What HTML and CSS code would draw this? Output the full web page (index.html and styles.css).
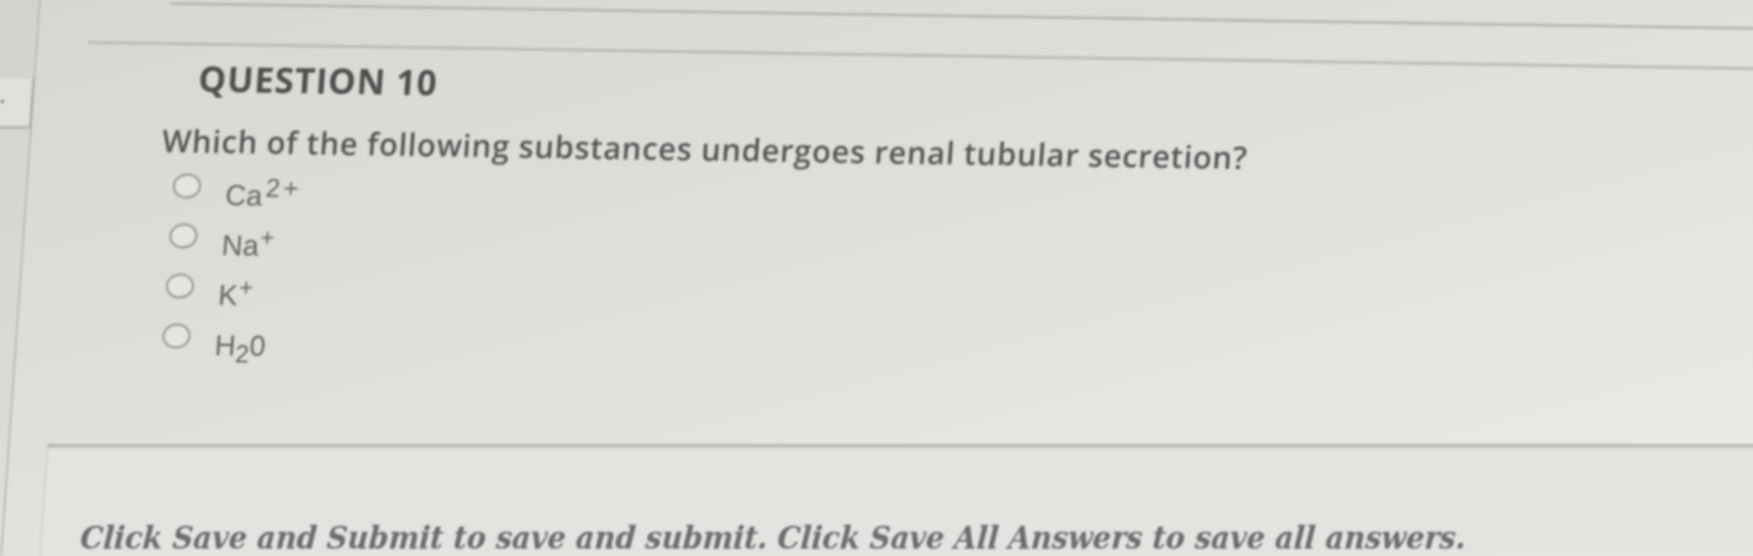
FILE: index.html
```html
<!DOCTYPE html>
<html lang="en">
<head>
<meta charset="utf-8">
<title>Question 10</title>
<link rel="stylesheet" href="styles.css">
</head>
<body>
<div class="screen">
  <aside class="sidebar">
    <div class="sidebar-tab"><span class="tab-dot"></span></div>
  </aside>
  <main class="content">
    <section class="question-area">
      <div class="prev-question-edge"></div>
      <div class="question">
        <h2 class="question-title">QUESTION 10</h2>
        <p class="question-text">Which of the following substances undergoes renal tubular secretion?</p>
        <ul class="options">
          <li class="option"><span class="radio"></span><span class="label">Ca<sup class="charge-lg">2+</sup></span></li>
          <li class="option"><span class="radio"></span><span class="label">Na<sup>+</sup></span></li>
          <li class="option"><span class="radio"></span><span class="label">K<sup>+</sup></span></li>
          <li class="option"><span class="radio"></span><span class="label">H<sub>2</sub>0</span></li>
        </ul>
      </div>
    </section>
    <footer class="submit-bar">
      <p class="submit-note">Click Save and Submit to save and submit. Click Save All Answers to save all answers.</p>
    </footer>
  </main>
</div>
</body>
</html>
```

FILE: styles.css
```css
html, body {
  margin: 0;
  padding: 0;
}

body {
  width: 1753px;
  height: 556px;
  overflow: hidden;
  background: linear-gradient(165deg, #d7d6d1 0%, #dfdfda 40%, #e6e6e2 75%, #ebebe8 100%);
}

.screen {
  display: grid;
  grid-template-columns: 50px 1fr;
  width: 1830px;
  height: 556px;
  margin-left: -30px;
  transform-origin: 0 300px;
  transform: skewX(-4deg);
  filter: blur(0.8px);
}

.sidebar {
  background: linear-gradient(180deg, #d3d2cd 0%, #dad9d4 60%, #e0e0dc 100%);
  border-right: 2px solid #bebdb8;
  padding-top: 77px;
}

.sidebar-tab {
  height: 48px;
  margin-right: -1px;
  background: #e1e0db;
  border-top: 1px solid #c9c8c3;
  border-bottom: 3px solid #b6b5b0;
  border-right: 2px solid #a9a8a3;
  position: relative;
}

.tab-dot {
  position: absolute;
  left: 17px;
  top: 22px;
  width: 3px;
  height: 3px;
  background: #7a7b78;
  border-radius: 1px;
}

.content {
  display: grid;
  grid-template-rows: 444px 1fr;
  min-width: 0;
}

.question-area {
  transform-origin: 0 0;
  transform: skewY(0.9deg);
}

.prev-question-edge {
  height: 3px;
  margin-left: 130px;
  background: #bab9b4;
}

.question {
  margin: 37px 0 0 50px;
  border-top: 3px solid #bdbcb6;
  padding-top: 12px;
}

.question-title {
  margin: 0;
  padding-left: 113px;
  font-family: "Open Sans", "Liberation Sans", sans-serif;
  font-weight: 700;
  font-size: 35px;
  line-height: 42px;
  color: #4d524e;
  letter-spacing: 0.8px;
}

.question-text {
  margin: 22px 0 0 0;
  padding-left: 81px;
  font-family: "Open Sans", "Liberation Sans", sans-serif;
  font-weight: 600;
  font-size: 31px;
  line-height: 38px;
  color: #535854;
  letter-spacing: 0.65px;
}

.options {
  list-style: none;
  margin: 10px 0 0 0;
  padding: 0 0 0 95px;
}

.option {
  display: flex;
  align-items: flex-start;
  height: 50px;
}

.radio {
  flex: none;
  width: 24px;
  height: 21px;
  margin-top: 4px;
  border: 2px solid #939592;
  border-radius: 50%;
  background: #e4e4e0;
}

.label {
  margin: 10px 0 0 25px;
  font-family: "Liberation Sans", Arial, sans-serif;
  font-size: 29px;
  line-height: 30px;
  color: #646764;
}

.label sup {
  font-size: 24px;
  line-height: 0;
  vertical-align: 10px;
  margin-left: 1px;
}

.label sup.charge-lg {
  font-size: 26px;
  letter-spacing: 3px;
  margin-left: 3px;
  vertical-align: 9px;
}

.label sub {
  font-size: 25px;
  line-height: 0;
  vertical-align: -7px;
}

.submit-bar {
  margin-left: 37px;
  border-top: 3px solid #b8b8b3;
  border-left: 1px solid #cdcdc8;
  background: #e3e3df;
  box-shadow: inset 0 2px 3px rgba(0, 0, 0, 0.06);
}

.submit-note {
  margin: 0;
  padding: 73px 0 0 39px;
  font-family: "DejaVu Serif", "Liberation Serif", serif;
  font-style: italic;
  font-weight: 700;
  font-stretch: condensed;
  font-size: 32px;
  line-height: 36px;
  color: #6c6e6c;
  white-space: nowrap;
}
```
